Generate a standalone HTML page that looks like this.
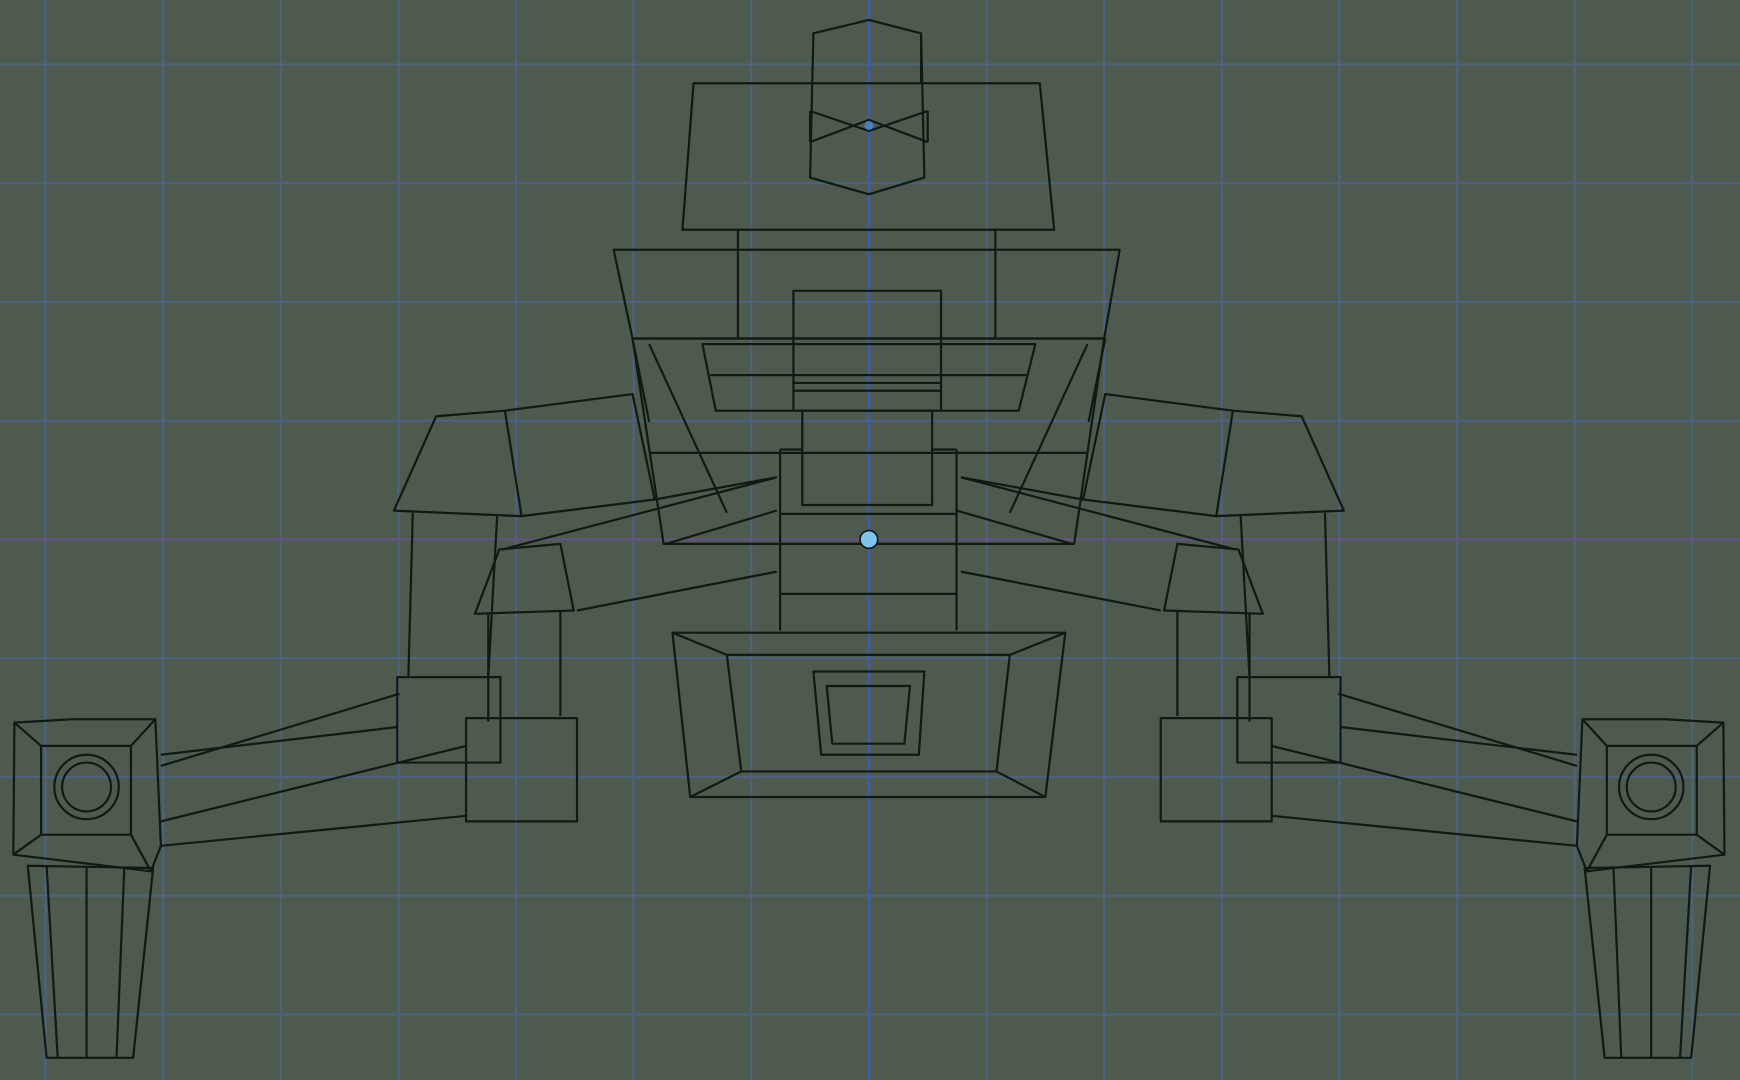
<!DOCTYPE html>
<html><head><meta charset="utf-8"><style>
html,body{margin:0;padding:0;background:#4f5a4f;overflow:hidden}
svg{display:block}
</style></head><body>
<svg width="1740" height="1080" viewBox="0 0 1568 973" preserveAspectRatio="none" xmlns="http://www.w3.org/2000/svg">
<rect width="1568" height="973" fill="#4f5a4f"/>
<g stroke="#4c6488" stroke-width="2" opacity="0.85">
<line x1="41" y1="0" x2="41" y2="973"/><line x1="147" y1="0" x2="147" y2="973"/><line x1="253" y1="0" x2="253" y2="973"/><line x1="359" y1="0" x2="359" y2="973"/><line x1="465" y1="0" x2="465" y2="973"/><line x1="571" y1="0" x2="571" y2="973"/><line x1="677" y1="0" x2="677" y2="973"/>
<line x1="889" y1="0" x2="889" y2="973"/><line x1="995" y1="0" x2="995" y2="973"/><line x1="1101" y1="0" x2="1101" y2="973"/><line x1="1207" y1="0" x2="1207" y2="973"/><line x1="1313" y1="0" x2="1313" y2="973"/><line x1="1419" y1="0" x2="1419" y2="973"/><line x1="1525" y1="0" x2="1525" y2="973"/>
<line y1="58" x1="0" y2="58" x2="1568"/><line y1="165" x1="0" y2="165" x2="1568"/><line y1="272" x1="0" y2="272" x2="1568"/><line y1="379" x1="0" y2="379" x2="1568"/><line y1="593" x1="0" y2="593" x2="1568"/><line y1="700" x1="0" y2="700" x2="1568"/><line y1="807" x1="0" y2="807" x2="1568"/><line y1="914" x1="0" y2="914" x2="1568"/>
</g>
<line x1="0" y1="486" x2="1568" y2="486" stroke="#6a4f8a" stroke-width="2"/>
<line x1="783" y1="0" x2="783" y2="973" stroke="#3c5ab0" stroke-width="2.5"/>
<g fill="none" stroke="#101a12" stroke-width="2" stroke-linejoin="round">
<polygon points="733,30 783,18 830,30 833,160 783,175 730,160"/>
<line x1="830" y1="30" x2="830" y2="75"/>
<polyline points="730,100 783,118 836,100"/><polyline points="730,128 783,108 836,128"/>
<line x1="730" y1="100" x2="730" y2="128"/><line x1="836" y1="100" x2="836" y2="128"/>
<polygon points="625,75 937,75 950,207 615,207"/>
<line x1="665" y1="207" x2="665" y2="305"/><line x1="897" y1="207" x2="897" y2="305"/>
<polygon points="553,225 1009,225 995,305 570,305"/>
<rect x="715" y="262" width="133" height="108"/>
<line x1="715" y1="345" x2="848" y2="345"/><line x1="715" y1="352" x2="848" y2="352"/>
<rect x="723" y="370" width="117" height="85"/>
<polygon points="570,305 995,305 968,490 598,490"/>
<polygon points="633,310 933,310 918,370 645,370"/>
<line x1="640" y1="338" x2="925" y2="338"/>
<line x1="585" y1="408" x2="980" y2="408"/>
<line x1="585" y1="310" x2="655" y2="462"/><line x1="980" y1="310" x2="910" y2="462"/>
<line x1="600" y1="490" x2="700" y2="460"/><line x1="966" y1="490" x2="862" y2="460"/>
<line x1="703" y1="405" x2="703" y2="568"/><line x1="862" y1="405" x2="862" y2="568"/>
<line x1="703" y1="463" x2="862" y2="463"/><line x1="703" y1="535" x2="862" y2="535"/>
<line x1="703" y1="405" x2="723" y2="405"/><line x1="840" y1="405" x2="862" y2="405"/>
<polygon points="606,570 960,570 942,718 622,718"/>
<polygon points="655,590 910,590 898,695 668,695"/>
<line x1="606" y1="570" x2="655" y2="590"/><line x1="960" y1="570" x2="910" y2="590"/>
<line x1="622" y1="718" x2="668" y2="695"/><line x1="942" y1="718" x2="898" y2="695"/>
<polygon points="733,605 833,605 828,680 740,680"/>
<polygon points="745,618 820,618 815,670 750,670"/>
</g>
<g id="half" fill="none" stroke="#101a12" stroke-width="2" stroke-linejoin="round">
<polygon points="393,375 455,370 570,355 590,450 470,465 355,460"/>
<line x1="455" y1="370" x2="470" y2="465"/>
<line x1="570" y1="305" x2="585" y2="380"/>
<line x1="372" y1="462" x2="368" y2="610"/><line x1="448" y1="465" x2="440" y2="610"/>
<polygon points="450,495 505,490 517,550 428,553"/>
<line x1="440" y1="553" x2="440" y2="650"/><line x1="505" y1="550" x2="505" y2="645"/>
<rect x="358" y="610" width="93" height="77"/>
<rect x="420" y="647" width="100" height="93"/>
<line x1="453" y1="495" x2="700" y2="430"/><line x1="520" y1="550" x2="700" y2="515"/><line x1="590" y1="450" x2="700" y2="430"/>
<line x1="145" y1="690" x2="360" y2="625"/><line x1="145" y1="680" x2="358" y2="655"/>
<line x1="145" y1="740" x2="420" y2="672"/><line x1="145" y1="762" x2="420" y2="735"/>
<polygon points="13,651 65,648 140,648 145,762 136,785 12,770"/>
<rect x="37" y="672" width="81" height="80"/>
<line x1="13" y1="651" x2="37" y2="672"/><line x1="140" y1="648" x2="118" y2="672"/>
<line x1="12" y1="770" x2="37" y2="752"/><line x1="136" y1="785" x2="118" y2="752"/>
<circle cx="78" cy="709" r="29"/><circle cx="78" cy="709" r="22"/>
<polygon points="25,780 138,782 120,953 42,953"/>
<line x1="42" y1="780" x2="52" y2="953"/><line x1="78" y1="782" x2="78" y2="953"/><line x1="112" y1="782" x2="105" y2="953"/>
</g>
<use href="#half" transform="translate(1566,0) scale(-1,1)"/>
<circle cx="783" cy="486" r="8" fill="#7fc4ec" stroke="#101a12" stroke-width="1.5"/>
<circle cx="783" cy="113" r="4" fill="#4a7fc0"/>
</svg>
</body></html>
